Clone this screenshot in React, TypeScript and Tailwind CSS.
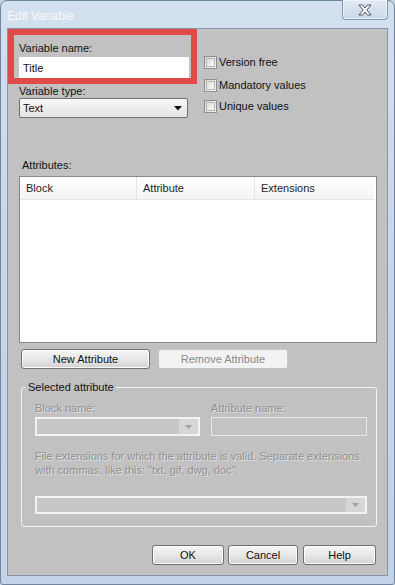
import React from "react";

function Checkbox({ label, className }: { label: string; className?: string }) {
  return (
    <div className={"flex items-center h-[14px] " + (className ?? "")}>
      <div className="w-[13px] h-[13px] border border-[#8e8f8f] bg-linear-to-br from-[#d6d6d6] to-[#f6f6f6] p-[1px]">
        <div className="w-full h-full border border-[#b8b8b8] bg-linear-to-br from-[#dcdcdc] to-[#fbfbfb]" />
      </div>
      <span className="ml-[2px] leading-[14px] text-[#111]">{label}</span>
    </div>
  );
}

function Button({ children, w, disabled }: { children: React.ReactNode; w: string; disabled?: boolean }) {
  return disabled ? (
    <div className={"h-[20px] rounded-[3px] border border-[#c3c7c9] bg-[#f2f2f2] flex items-center justify-center text-[#8a8a8a] " + w}>
      {children}
    </div>
  ) : (
    <div className={"h-[20px] rounded-[3px] border border-[#707070] bg-linear-to-b from-[#f6f6f6] via-[#e8e8e8] to-[#d3d3d3] flex items-center justify-center text-[#111] shadow-[inset_0_0_0_1px_#fbfbfb] " + w}>
      {children}
    </div>
  );
}

const disabledText = "text-[#8f8f8f] [text-shadow:1px_1px_0_#e2e2e2]";

export default function App() {
  return (
    <div className="w-[395px] h-[585px] bg-[#c6d5e8] font-['Liberation_Sans',Arial,sans-serif] text-[11px]">
      <div className="w-[395px] h-[585px] border border-[#71859f] rounded-t-[7px] rounded-b-[3px] bg-linear-to-b from-[#d3e0ef] via-[#c6d5e8] to-[#c3d3e7] flex flex-col">
        {/* Title bar */}
        <div className="h-[27px] flex items-start justify-between">
          <div className="ml-[6px] mt-[7px] text-[12px] leading-[16px] text-[#f6f8fb] [text-shadow:0_0_3px_#dde6f1]">
            Edit Variable
          </div>
          <div className="mr-[6px] -mt-[1px] w-[46px] h-[20px] border border-t-0 border-[#8397b1] rounded-b-[4px] bg-linear-to-b from-[#e3ebf5] to-[#c9d7e9] shadow-[inset_0_0_0_1px_#eef3f9] flex items-center justify-center">
            <svg width="14" height="12" viewBox="0 0 14 12">
              <polygon
                points="1,1 4.6,1 7,4 9.4,1 13,1 9,6 13,11 9.4,11 7,8 4.6,11 1,11 5,6"
                fill="#ffffff"
                stroke="#4e5257"
                strokeWidth="1"
                strokeLinejoin="round"
              />
            </svg>
          </div>
        </div>

        {/* Client area */}
        <div className="relative mx-[6px] w-[381px] h-[548px] border border-[#8595a8] bg-[#c1c1c1] pl-[11px] pr-[10px] flex flex-col">
          {/* Top section */}
          <div className="flex items-start">
            <div className="w-[170px] flex flex-col">
              <div className="mt-[12px] leading-[14px] text-[#111]">Variable name:</div>
              <div className="mt-[2px] h-[22px] bg-white flex items-center pl-[4px] text-[#111]">Title</div>
              <div className="mt-[5px] leading-[14px] text-[#111]">Variable type:</div>
              <div className="mt-0 w-[169px] h-[20px] rounded-[2px] border border-[#707070] bg-linear-to-b from-[#f8f8f8] to-[#e3e3e3] flex items-center justify-between pl-[3px] pr-[5px] text-[#111]">
                <span>Text</span>
                <svg width="8" height="5" viewBox="0 0 8 5">
                  <polygon points="0,0 8,0 4,4.5" fill="#111" />
                </svg>
              </div>
            </div>
            <div className="ml-[15px] flex flex-col">
              <Checkbox label="Version free" className="mt-[26px]" />
              <Checkbox label="Mandatory values" className="mt-[9px]" />
              <Checkbox label="Unique values" className="mt-[7px]" />
            </div>
          </div>

          {/* Attributes */}
          <div className="mt-[40px] ml-[3px] leading-[14px] text-[#111]">Attributes:</div>
          <div className="mt-[4px] w-[358px] h-[167px] border border-[#828790] bg-white">
            <div className="flex h-[23px] w-[354px] bg-linear-to-b from-white to-[#f4f4f4] border-b border-[#e5e5e5] text-[#1e1e1e]">
              <div className="w-[117px] border-r border-[#e3e3e3] pl-[6px] flex items-center">Block</div>
              <div className="w-[118px] border-r border-[#e3e3e3] pl-[6px] flex items-center">Attribute</div>
              <div className="flex-1 pl-[6px] flex items-center">Extensions</div>
            </div>
          </div>

          {/* Attribute buttons */}
          <div className="mt-[6px] ml-[2px] flex gap-[8px]">
            <Button w="w-[129px]">New Attribute</Button>
            <Button w="w-[130px]" disabled>Remove Attribute</Button>
          </div>

          {/* Selected attribute group */}
          <fieldset className="mt-[11px] ml-[2px] w-[356px] border border-[#f3f3f3] rounded-[3px]">
            <legend className="ml-[4px] px-[2px] leading-[14px] text-[#111]">Selected attribute</legend>
            <div className="pl-[13px] pr-[8px] pt-[7px] pb-[12px] flex flex-col">
              <div className="flex">
                <div className="w-[165px] flex flex-col">
                  <div className={"leading-[14px] " + disabledText}>Block name:</div>
                  <div className="mt-[2px] h-[19px] border-2 border-[#f3f3f3] bg-[#c7c7c7] flex justify-end">
                    <div className="w-[19px] bg-[#d6d6d6] flex items-center justify-center">
                      <svg width="7" height="4" viewBox="0 0 7 4">
                        <polygon points="0,0 7,0 3.5,4" fill="#a3a3a3" />
                      </svg>
                    </div>
                  </div>
                </div>
                <div className="ml-[11px] w-[156px] flex flex-col">
                  <div className={"leading-[14px] " + disabledText}>Attribute name:</div>
                  <div className="mt-[2px] h-[19px] border border-[#e8e8e8] bg-[#c3c3c3]" />
                </div>
              </div>
              <div className={"mt-[13px] leading-[14px] whitespace-nowrap " + disabledText}>
                File extensions for which the attribute is valid. Separate extensions
                <br />
                with commas, like this: "txt, gif, dwg, doc":
              </div>
              <div className="mt-[19px] w-[332px] h-[18px] border-2 border-[#f3f3f3] bg-[#c7c7c7] flex justify-end">
                <div className="w-[19px] bg-[#d6d6d6] flex items-center justify-center">
                  <svg width="7" height="4" viewBox="0 0 7 4">
                    <polygon points="0,0 7,0 3.5,4" fill="#a3a3a3" />
                  </svg>
                </div>
              </div>
            </div>
          </fieldset>

          {/* Dialog buttons */}
          <div className="mt-[18px] mr-[1px] flex justify-end">
            <Button w="w-[72px]">OK</Button>
            <div className="ml-[4px]">
              <Button w="w-[70px]">Cancel</Button>
            </div>
            <div className="ml-[5px]">
              <Button w="w-[73px]">Help</Button>
            </div>
          </div>

          {/* Red highlight overlay */}
          <div className="absolute left-0 top-0 w-[189px] h-[55px] border-[6px] border-b-[6px] border-[#e24a4a] pointer-events-none" />
        </div>
      </div>
    </div>
  );
}
